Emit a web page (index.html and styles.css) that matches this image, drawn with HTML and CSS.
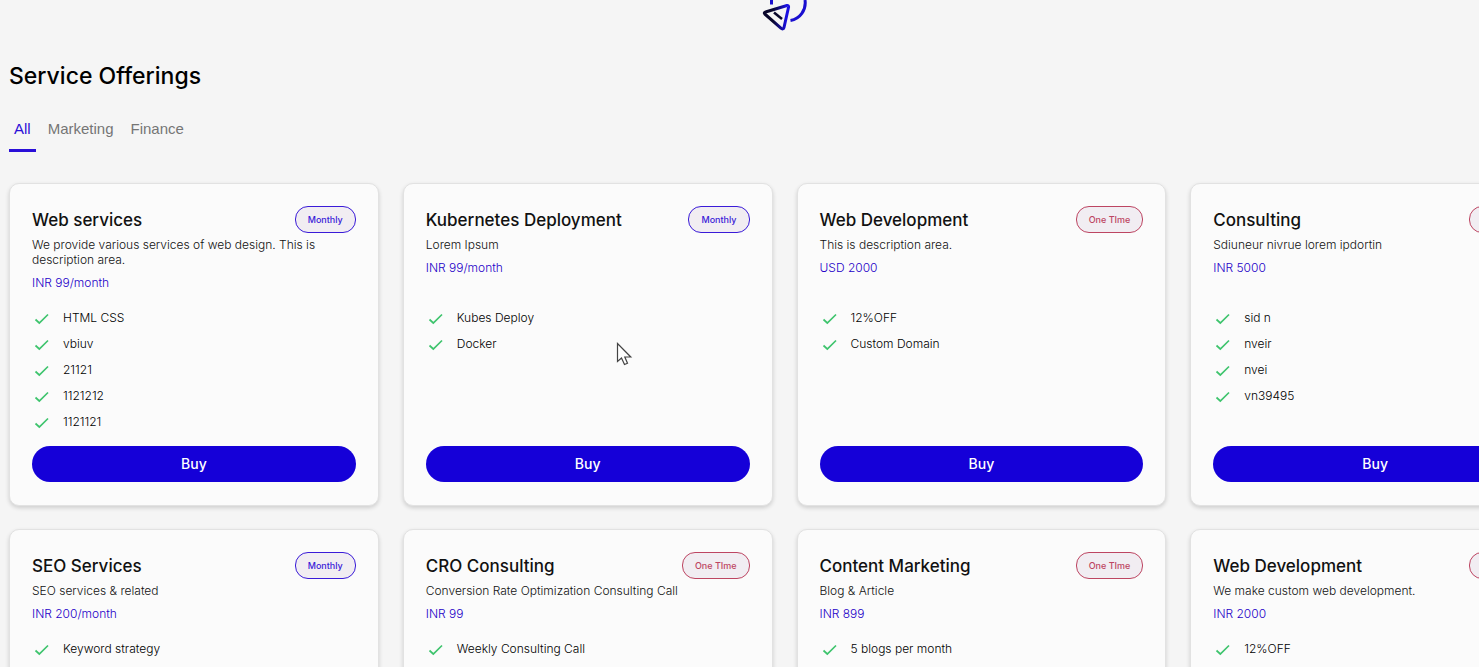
FILE: index.html
```
<!DOCTYPE html>
<html lang="en">
<head>
    <meta charset="UTF-8">
    <meta name="viewport" content="width=device-width, initial-scale=1.0">
    <title>Service Offerings</title>
    <link rel="stylesheet" href="styles.css">
</head>
<body>
    <svg class="sprite" aria-hidden="true">
        <symbol id="check" viewBox="0 0 16 12">
            <path d="M1.5 6.5 5.3 10 14 1.5" fill="none" stroke="#3ec46d" stroke-width="1.7"/>
        </symbol>
    </svg>

    <header class="logo-bar">
        <svg class="logo" viewBox="0 0 46 32" aria-hidden="true">
            <defs>
                <linearGradient id="plane" x1="0" y1="0" x2="1" y2="0">
                    <stop offset="0" stop-color="#09072b"/>
                    <stop offset="0.35" stop-color="#09072b"/>
                    <stop offset="0.9" stop-color="#1a0fe0"/>
                </linearGradient>
            </defs>
            <path d="M9.500 0v4.500" fill="none" stroke="#1a0fd0" stroke-width="3"/>
            <path d="M43 0c1.500 10-5 19-14.500 20.500" fill="none" stroke="#1a0fd0" stroke-width="3"/>
            <path d="M3.500 12 25 5.500c1-.2 1.800.5 1.600 1.500L22 27.500c-.3 1.500-1.800 1.800-2.800.8L2.800 14c-.8-.8-.5-1.700.7-2z" fill="none" stroke="url(#plane)" stroke-width="3" stroke-linejoin="round"/>
            <path d="M12 12.500 20 19" fill="none" stroke="#09072b" stroke-width="2.500"/>
        </svg>
    </header>

    <main>
        <h1>Service Offerings</h1>
        <nav class="tabs">
            <a class="tab active" href="#all">All</a>
            <a class="tab" href="#marketing">Marketing</a>
            <a class="tab" href="#finance">Finance</a>
        </nav>

        <div class="services">
            <article class="card">
                <div class="card-info">
                    <div class="card-head">
                        <h2>Web services</h2>
                        <span class="badge monthly">Monthly</span>
                    </div>
                    <p class="description">We provide various services of web design. This is description area.</p>
                    <p class="price">INR 99/month</p>
                </div>
                <ul class="features">
                    <li><svg class="check"><use href="#check"/></svg>HTML CSS</li>
                    <li><svg class="check"><use href="#check"/></svg>vbiuv</li>
                    <li><svg class="check"><use href="#check"/></svg>21121</li>
                    <li><svg class="check"><use href="#check"/></svg>1121212</li>
                    <li><svg class="check"><use href="#check"/></svg>1121121</li>
                </ul>
                <button class="buy" type="button">Buy</button>
            </article>

            <article class="card">
                <div class="card-info">
                    <div class="card-head">
                        <h2>Kubernetes Deployment</h2>
                        <span class="badge monthly">Monthly</span>
                    </div>
                    <p class="description">Lorem Ipsum</p>
                    <p class="price">INR 99/month</p>
                </div>
                <ul class="features">
                    <li><svg class="check"><use href="#check"/></svg>Kubes Deploy</li>
                    <li><svg class="check"><use href="#check"/></svg>Docker</li>
                </ul>
                <button class="buy" type="button">Buy</button>
            </article>

            <article class="card">
                <div class="card-info">
                    <div class="card-head">
                        <h2>Web Development</h2>
                        <span class="badge one-time">One TIme</span>
                    </div>
                    <p class="description">This is description area.</p>
                    <p class="price">USD 2000</p>
                </div>
                <ul class="features">
                    <li><svg class="check"><use href="#check"/></svg>12%OFF</li>
                    <li><svg class="check"><use href="#check"/></svg>Custom Domain</li>
                </ul>
                <button class="buy" type="button">Buy</button>
            </article>

            <article class="card">
                <div class="card-info">
                    <div class="card-head">
                        <h2>Consulting</h2>
                        <span class="badge one-time">One TIme</span>
                    </div>
                    <p class="description">Sdiuneur nivrue lorem ipdortin</p>
                    <p class="price">INR 5000</p>
                </div>
                <ul class="features">
                    <li><svg class="check"><use href="#check"/></svg>sid n</li>
                    <li><svg class="check"><use href="#check"/></svg>nveir</li>
                    <li><svg class="check"><use href="#check"/></svg>nvei</li>
                    <li><svg class="check"><use href="#check"/></svg>vn39495</li>
                </ul>
                <button class="buy" type="button">Buy</button>
            </article>

            <article class="card">
                <div class="card-info">
                    <div class="card-head">
                        <h2>SEO Services</h2>
                        <span class="badge monthly">Monthly</span>
                    </div>
                    <p class="description">SEO services &amp; related</p>
                    <p class="price">INR 200/month</p>
                </div>
                <ul class="features">
                    <li><svg class="check"><use href="#check"/></svg>Keyword strategy</li>
                </ul>
                <button class="buy" type="button">Buy</button>
            </article>

            <article class="card">
                <div class="card-info">
                    <div class="card-head">
                        <h2>CRO Consulting</h2>
                        <span class="badge one-time">One TIme</span>
                    </div>
                    <p class="description">Conversion Rate Optimization Consulting Call</p>
                    <p class="price">INR 99</p>
                </div>
                <ul class="features">
                    <li><svg class="check"><use href="#check"/></svg>Weekly Consulting Call</li>
                </ul>
                <button class="buy" type="button">Buy</button>
            </article>

            <article class="card">
                <div class="card-info">
                    <div class="card-head">
                        <h2>Content Marketing</h2>
                        <span class="badge one-time">One TIme</span>
                    </div>
                    <p class="description">Blog &amp; Article</p>
                    <p class="price">INR 899</p>
                </div>
                <ul class="features">
                    <li><svg class="check"><use href="#check"/></svg>5 blogs per month</li>
                </ul>
                <button class="buy" type="button">Buy</button>
            </article>

            <article class="card">
                <div class="card-info">
                    <div class="card-head">
                        <h2>Web Development</h2>
                        <span class="badge one-time">One TIme</span>
                    </div>
                    <p class="description">We make custom web development.</p>
                    <p class="price">INR 2000</p>
                </div>
                <ul class="features">
                    <li><svg class="check"><use href="#check"/></svg>12%OFF</li>
                </ul>
                <button class="buy" type="button">Buy</button>
            </article>
        </div>
    </main>

    <svg class="pointer" viewBox="0 0 17 25" aria-hidden="true">
        <path d="M1.500 1.500v18l4-3.500 3 6.500 3-1.300-2.700-6.200h6z" fill="#fff" stroke="#444" stroke-width="1.200"/>
    </svg>
</body>
</html>
```
FILE: styles.css
```
* {
    box-sizing: border-box;
}
body {
    margin: 0;
    height: 100vh;
    overflow: hidden;
    font-family: Inter, "Liberation Sans", sans-serif;
    font-size: 12px;
    font-weight: 300;
    line-height: 15px;
    color: #000;
    background-color: #f5f5f5;
}
h1, h2, p, ul {
    margin: 0;
    padding: 0;
}
.sprite {
    display: none;
}
.logo-bar {
    display: flex;
    justify-content: center;
    padding-left: 90px;
}
.logo {
    width: 46px;
    height: 32px;
}
main {
    padding: 28px 9px 0;
}
h1 {
    font-size: 23px;
    font-weight: 500;
    line-height: 32px;
    color: #000;
}
.tabs {
    display: flex;
    gap: 7px;
    margin-top: 22px;
}
.tab {
    padding: 6px 5px 11px;
    border-bottom: 3px solid transparent;
    font-family: "Liberation Sans", Arial, sans-serif;
    font-size: 15px;
    font-weight: 400;
    line-height: 18px;
    color: #757575;
    text-decoration: none;
}
.tab.active {
    color: #2a0fd8;
    border-bottom-color: #2a0fd8;
}
/* cards in a row share their three inner rows */
.services {
    display: grid;
    grid-template-columns: repeat(4, 25vw);
    column-gap: 24px;
    margin-top: 31px;
}
.card {
    display: grid;
    grid-row: span 3;
    grid-template-rows: subgrid;
    margin-bottom: 23px;
    padding: 22px 22px 23px;
    background-color: #fbfbfb;
    border: 1px solid #e2e2e2;
    border-radius: 10px;
    box-shadow: 0 2px 4px rgba(0, 0, 0, 0.16);
}
.card-info {
    padding-bottom: 14px;
}
.card-head {
    display: flex;
    justify-content: space-between;
    align-items: center;
}
h2 {
    font-size: 17px;
    font-weight: 500;
    line-height: 26px;
    color: #111;
}
.badge {
    padding: 5px 12px;
    border: 1px solid;
    border-radius: 13px;
    font-size: 9px;
    font-weight: 500;
    line-height: 15px;
    background-color: #f1edf2;
}
.monthly {
    color: #3a1bd8;
}
.one-time {
    color: #bd4562;
}
.description {
    max-width: 300px;
    margin-top: 4px;
    color: #111;
}
.price {
    margin-top: 8px;
    color: #2400c8;
}
.features {
    min-height: 142px;
    list-style: none;
}
.features li {
    display: flex;
    align-items: center;
    gap: 13px;
    height: 26px;
    padding-left: 2px;
}
.check {
    width: 16px;
    height: 12px;
    margin-top: 4px;
}
.buy {
    height: 36px;
    padding: 0 0 2px;
    border: none;
    border-radius: 18px;
    font-family: inherit;
    font-size: 14px;
    font-weight: 500;
    color: #fff;
    background-color: #1500d8;
    cursor: pointer;
}
.pointer {
    position: absolute;
    left: 616px;
    top: 342px;
    width: 17px;
    height: 25px;
}
```
